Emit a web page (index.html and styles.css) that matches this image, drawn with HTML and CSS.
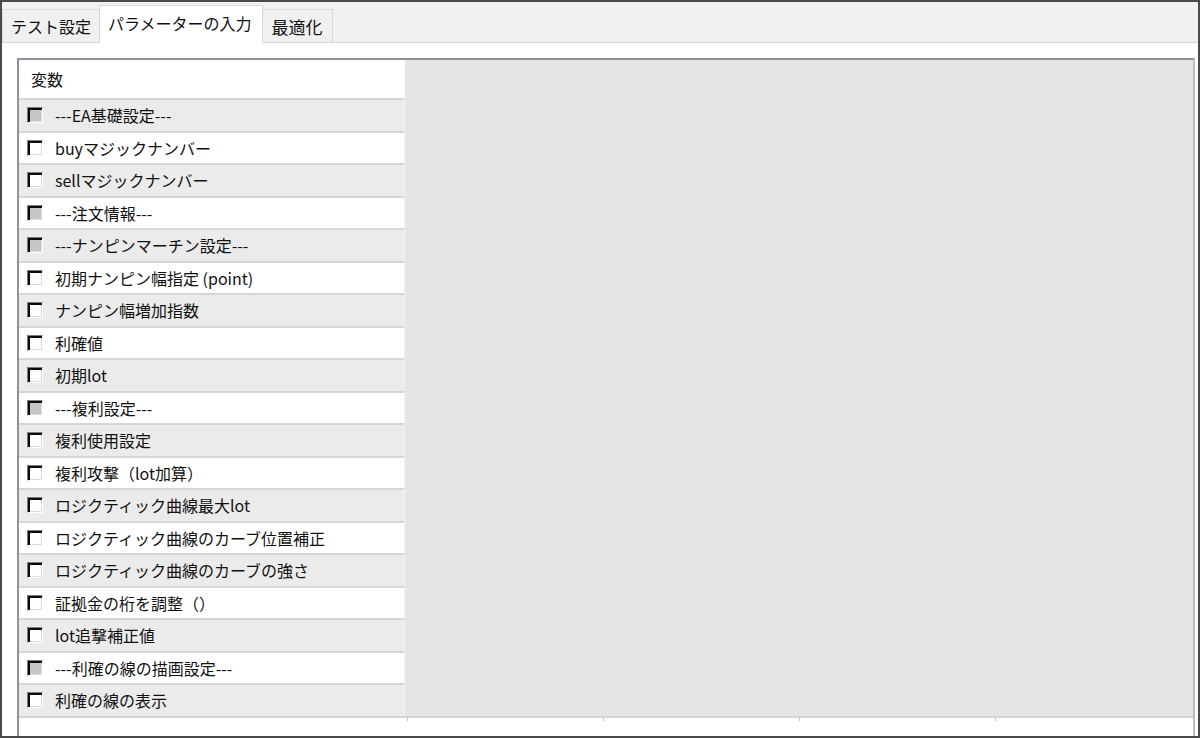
FILE: index.html
```html
<!DOCTYPE html>
<html lang="ja">
<head>
<meta charset="utf-8">
<title>パラメーターの入力</title>
<link rel="stylesheet" href="styles.css">
</head>
<body>
<div class="window">
  <div class="tabs">
    <div class="tab first">テスト設定</div>
    <div class="tab active">パラメーターの入力</div>
    <div class="tab wide">最適化</div>
  </div>
  <div class="content">
    <div class="grid">
      <div class="table">
        <div class="col-names">
          <div class="header">変数</div>
          <div class="row odd"><span class="cb disabled"></span><span class="label">---EA基礎設定---</span></div>
          <div class="row"><span class="cb"></span><span class="label">buyマジックナンバー</span></div>
          <div class="row odd"><span class="cb"></span><span class="label">sellマジックナンバー</span></div>
          <div class="row"><span class="cb disabled"></span><span class="label">---注文情報---</span></div>
          <div class="row odd"><span class="cb disabled"></span><span class="label">---ナンピンマーチン設定---</span></div>
          <div class="row"><span class="cb"></span><span class="label">初期ナンピン幅指定 (point)</span></div>
          <div class="row odd"><span class="cb"></span><span class="label">ナンピン幅増加指数</span></div>
          <div class="row"><span class="cb"></span><span class="label">利確値</span></div>
          <div class="row odd"><span class="cb"></span><span class="label">初期lot</span></div>
          <div class="row"><span class="cb disabled"></span><span class="label">---複利設定---</span></div>
          <div class="row odd"><span class="cb"></span><span class="label">複利使用設定</span></div>
          <div class="row"><span class="cb"></span><span class="label">複利攻撃（lot加算）</span></div>
          <div class="row odd"><span class="cb"></span><span class="label">ロジクティック曲線最大lot</span></div>
          <div class="row"><span class="cb"></span><span class="label">ロジクティック曲線のカーブ位置補正</span></div>
          <div class="row odd"><span class="cb"></span><span class="label">ロジクティック曲線のカーブの強さ</span></div>
          <div class="row"><span class="cb"></span><span class="label">証拠金の桁を調整（）</span></div>
          <div class="row odd"><span class="cb"></span><span class="label">lot追撃補正値</span></div>
          <div class="row"><span class="cb disabled"></span><span class="label">---利確の線の描画設定---</span></div>
          <div class="row odd"><span class="cb"></span><span class="label">利確の線の表示</span></div>
        </div>
        <div class="col-rest"></div>
      </div>
      <div class="footer">
        <div class="fcell first"></div>
        <div class="fcell"></div>
        <div class="fcell"></div>
        <div class="fcell"></div>
        <div class="fcell last"></div>
      </div>
    </div>
  </div>
</div>
</body>
</html>
```

FILE: styles.css
```css
html, body {
  margin: 0;
  padding: 0;
  background: #ffffff;
}

.window {
  width: 1200px;
  height: 738px;
  box-sizing: border-box;
  border: 2px solid #4a4a4a;
  background: #ffffff;
  display: flex;
  flex-direction: column;
  overflow: hidden;
  font-family: "Noto Sans CJK JP", "Noto Sans", sans-serif;
  font-size: 16px;
  color: #111111;
}

.tabs {
  height: 40px;
  flex: none;
  background: #f0f0f0;
  border-bottom: 1px solid #d9d9d9;
  display: flex;
  align-items: flex-end;
}

.tab {
  height: 33px;
  box-sizing: border-box;
  padding: 0 8px;
  border: 1px solid #d9d9d9;
  border-bottom: none;
  background: #f0f0f0;
  display: flex;
  align-items: center;
  line-height: 1;
  margin-right: -1px;
}

.tab.first {
  padding: 0 8px 0 8px;
}

.tab.wide {
  padding: 0 9px 0 9px;
  font-size: 17px;
}

.tab.active {
  height: 38px;
  background: #ffffff;
  margin-bottom: -1px;
  padding: 0 10px 4px 8px;
  position: relative;
  z-index: 1;
}

.content {
  flex: 1;
  padding: 15px 3px 0 15px;
  display: flex;
  flex-direction: column;
  min-height: 0;
}

.grid {
  flex: 1;
  border-top: 2px solid #8d939b;
  border-left: 2px solid #8d939b;
  border-right: 2px solid #b9bcc0;
  display: flex;
  flex-direction: column;
  min-height: 0;
}

.table {
  display: flex;
  flex: none;
}

.col-names {
  width: 386px;
  flex: none;
  background: #ffffff;
}

.col-rest {
  flex: 1;
  background: #e6e4e4;
}

.header {
  height: 38px;
  box-sizing: border-box;
  padding-left: 12px;
  display: flex;
  align-items: center;
  background: #ffffff;
}

.row {
  height: 32.5px;
  box-sizing: border-box;
  border-top: 2px solid #d6d6d6;
  padding-left: 8px;
  display: flex;
  align-items: center;
  background: #ffffff;
  border-right: 1px solid #f4f4f4;
}

.row.odd {
  background: #ebebeb;
}

.cb {
  width: 16px;
  height: 16px;
  box-sizing: border-box;
  flex: none;
  background: #ffffff;
  border-top: 1px solid #7a7a7a;
  border-left: 1px solid #7a7a7a;
  border-right: 1px solid #ffffff;
  border-bottom: 1px solid #ffffff;
  box-shadow: inset 2px 2px 0 #0a0a0a, inset -1px -1px 0 #dcdcdc;
  margin-right: 12px;
}

.cb.disabled {
  background: #c6c6c6;
}

.label {
  line-height: 1;
  white-space: nowrap;
}

.footer {
  display: flex;
  height: 3px;
  border-top: 2px solid #d4d4d4;
  flex: none;
}

.fcell {
  width: 195px;
  border-left: 1px solid #c4c4c4;
}

.fcell.first {
  width: 388px;
  border-left: none;
}

.fcell.last {
  flex: 1;
}
```
